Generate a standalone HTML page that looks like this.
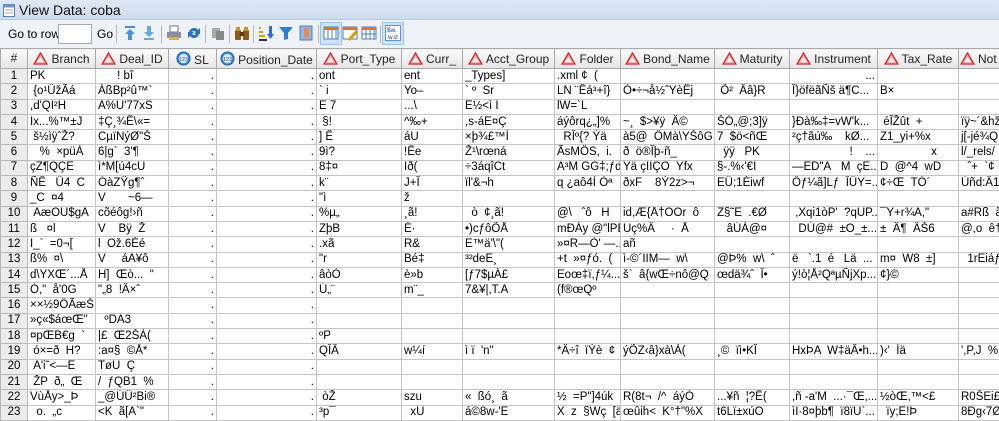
<!DOCTYPE html>
<html><head><meta charset="utf-8">
<style>
*{margin:0;padding:0;box-sizing:border-box}
body{width:999px;height:421px;overflow:hidden;background:#fff;font-family:"Liberation Sans",sans-serif;font-size:12px;color:#000;position:relative}
#title{position:absolute;left:0;top:0;width:999px;height:20px;background:linear-gradient(#dfe9f5,#cddcee);border-bottom:1px solid #b9c9dd}
#title span{position:absolute;left:19px;top:2px;font-size:14px;color:#111}
#tb{position:absolute;left:0;top:20px;width:999px;height:28px;background:#eef1f5}
.t{position:absolute;top:7px;font-size:12px}
#inp{position:absolute;left:58px;top:4px;width:34px;height:20px;background:#fff;border:1px solid #a8a8a8}
.sep{position:absolute;top:5px;width:1px;height:18px;background:#b8b8b8}
.ic{position:absolute;top:5px;width:16px;height:16px}
.hl{position:absolute;top:2px;width:22px;height:23px;background:#cfe3f7;border:1px solid #9cc3ea}
#grid{position:absolute;left:0;top:48px;width:999px;height:373px;overflow:hidden}
table{border-collapse:collapse;table-layout:fixed;width:1040px}
td,th{border:1px solid #c4c4c4;white-space:nowrap;overflow:hidden;padding:0 2px;height:15.3px;line-height:13px;font-weight:normal;font-size:11.5px}
th{height:20px;background:linear-gradient(#fafafa,#e6e6e6);border-color:#a9a9a9;font-size:12px;color:#222;padding:0 1px}
th svg{vertical-align:-2px;margin-right:3px}
td.n{background:#ececec;text-align:center;border-color:#b8b8b8}
td.r{text-align:right}
</style></head><body>
<div id="title">
<svg style="position:absolute;left:3px;top:3px" width="13" height="14"><rect x="0.5" y="1.5" width="11" height="12" fill="#fff" stroke="#5a7fb0"/><rect x="0.5" y="1.5" width="11" height="3" fill="#6f95c8"/><line x1="2" y1="7" x2="10" y2="7" stroke="#9ab"/><line x1="2" y1="10" x2="10" y2="10" stroke="#9ab"/></svg>
<span>View Data: coba</span></div>
<div id="tb">
<span class="t" style="left:8px">Go to row</span>
<div id="inp"></div>
<span class="t" style="left:97px">Go</span>
<div class="sep" style="left:116px"></div>
<svg class="ic" style="left:122px" viewBox="0 0 16 16"><rect x="3" y="1" width="10" height="2" fill="#4a90d9"/><path d="M8 4 L3 9 H6 V15 H10 V9 H13Z" fill="#4a90d9"/></svg>
<svg class="ic" style="left:141px" viewBox="0 0 16 16"><path d="M6 1 H10 V7 H13 L8 12 L3 7 H6Z" fill="#6aa7e0"/><rect x="3" y="13" width="10" height="2" fill="#6aa7e0"/></svg>
<div class="sep" style="left:161px"></div>
<svg class="ic" style="left:166px" viewBox="0 0 16 16"><rect x="4" y="1" width="8" height="6" fill="#fff" stroke="#777"/><rect x="1" y="7" width="14" height="6" fill="#8a8fa0"/><rect x="3" y="12" width="10" height="3" fill="#e0b050"/></svg>
<svg class="ic" style="left:186px" viewBox="0 0 16 16"><path d="M3 8 A5 5 0 0 1 12 5 L14 3 V9 H8 L10 7 A3 3 0 0 0 5 8Z M13 8 A5 5 0 0 1 4 11 L2 13 V7 H8 L6 9 A3 3 0 0 0 11 8Z" fill="#2b6fc7"/></svg>
<div class="sep" style="left:205px"></div>
<svg class="ic" style="left:210px" viewBox="0 0 16 16"><rect x="2" y="3" width="8" height="10" fill="#aaa"/><rect x="6" y="6" width="8" height="9" fill="#888"/></svg>
<div class="sep" style="left:229px"></div>
<svg class="ic" style="left:234px" viewBox="0 0 16 16"><rect x="1" y="5" width="6" height="10" rx="1" fill="#8a5a1a"/><rect x="9" y="5" width="6" height="10" rx="1" fill="#8a5a1a"/><rect x="2" y="2" width="4" height="4" fill="#c9922e"/><rect x="10" y="2" width="4" height="4" fill="#c9922e"/><rect x="6" y="7" width="4" height="4" fill="#5a3a10"/></svg>
<div class="sep" style="left:253px"></div>
<svg class="ic" style="left:258px" viewBox="0 0 16 16"><rect x="1" y="2" width="2" height="2" fill="#d9a400"/><rect x="1" y="6" width="4" height="2" fill="#d9a400"/><rect x="1" y="10" width="6" height="2" fill="#d9a400"/><rect x="1" y="14" width="8" height="2" fill="#333"/><path d="M11 1 H14 V9 H16 L12.5 14 L9 9 H11Z" fill="#2b6fc7"/></svg>
<svg class="ic" style="left:278px" viewBox="0 0 16 16"><path d="M1 2 H15 L10 8 V14 L6 15 V8Z" fill="#2b7fd0"/></svg>
<svg class="ic" style="left:298px" viewBox="0 0 16 16"><rect x="2" y="1" width="12" height="14" fill="#8cb8e8" stroke="#4a80c0"/><rect x="6" y="3" width="5" height="10" fill="#e85" /></svg>
<div class="sep" style="left:318px"></div>
<div class="hl" style="left:320px"></div>
<svg class="ic" style="left:323px" viewBox="0 0 16 16"><rect x="1" y="2" width="14" height="12" fill="#fff" stroke="#4a80c0"/><rect x="1" y="2" width="14" height="3" fill="#e07030"/><path d="M5 5V14M9 5V14M13 5V14" stroke="#4a80c0"/></svg>
<svg class="ic" style="left:342px" viewBox="0 0 16 16"><rect x="1" y="2" width="14" height="12" fill="#fff" stroke="#4a80c0"/><rect x="1" y="2" width="14" height="3" fill="#e07030"/><path d="M7 15 L15 6" stroke="#d4a000" stroke-width="3"/></svg>
<svg class="ic" style="left:361px" viewBox="0 0 16 16"><rect x="1" y="2" width="14" height="12" fill="#fff" stroke="#4a80c0"/><rect x="1" y="2" width="14" height="3" fill="#e07030"/><path d="M5 5V14M9 5V14M13 5V14M1 9H15" stroke="#4a80c0"/></svg>
<div class="sep" style="left:380px"></div>
<div class="hl" style="left:382px"></div>
<svg class="ic" style="left:385px" viewBox="0 0 16 16"><rect x="0.5" y="0.5" width="15" height="15" fill="#fff" stroke="#6a8fc0"/><text x="2" y="7" font-size="6.5" fill="#1a3f90" font-family="Liberation Sans">$w.</text><text x="3" y="14" font-size="6.5" fill="#1a3f90" font-family="Liberation Sans">w.d</text></svg>
</div>
<svg width="0" height="0" style="position:absolute"><defs>
<symbol id="tri" viewBox="0 0 16 14"><path d="M8 1 L15 13 H1Z" fill="#f4a0a0" stroke="#d02020" stroke-width="1.3"/><path d="M8 5 L11.5 11 H4.5Z" fill="#fff"/></symbol>
<symbol id="num" viewBox="0 0 16 16"><circle cx="8" cy="8" r="7" fill="#3f84d8" stroke="#1f5fb0"/><circle cx="8" cy="8" r="5" fill="#dbe9fa"/><text x="8" y="10.5" font-size="6" text-anchor="middle" fill="#1f5fb0" font-family="Liberation Sans">123</text></symbol>
</defs></svg>
<div id="grid"><table>
<colgroup><col style="width:27px"><col style="width:68px"><col style="width:73px"><col style="width:48px"><col style="width:100px"><col style="width:85px"><col style="width:61px"><col style="width:92px"><col style="width:66px"><col style="width:94px"><col style="width:75px"><col style="width:88px"><col style="width:81px"><col style="width:82px"></colgroup>
<tr><th>#</th><th><svg width="15" height="13"><use href="#tri"/></svg>Branch</th><th><svg width="15" height="13"><use href="#tri"/></svg>Deal_ID</th><th><svg width="15" height="15"><use href="#num"/></svg>SL</th><th><svg width="15" height="15"><use href="#num"/></svg>Position_Date</th><th><svg width="15" height="13"><use href="#tri"/></svg>Port_Type</th><th><svg width="15" height="13"><use href="#tri"/></svg>Curr_</th><th><svg width="15" height="13"><use href="#tri"/></svg>Acct_Group</th><th><svg width="15" height="13"><use href="#tri"/></svg>Folder</th><th><svg width="15" height="13"><use href="#tri"/></svg>Bond_Name</th><th><svg width="15" height="13"><use href="#tri"/></svg>Maturity</th><th><svg width="15" height="13"><use href="#tri"/></svg>Instrument</th><th><svg width="15" height="13"><use href="#tri"/></svg>Tax_Rate</th><th style="text-align:left"><svg width="15" height="13"><use href="#tri"/></svg>Not</th></tr>
<tr><td class="n">1</td><td>PK</td><td>&nbsp; &nbsp; &nbsp; ! bî</td><td class="r">.</td><td class="r">.</td><td>ont</td><td>ent</td><td>_Types]</td><td>.xml ¢ &nbsp;(</td><td></td><td></td><td class="r">...</td><td></td><td></td></tr>
<tr><td class="n">2</td><td>&nbsp;{o¹ÛžÃá</td><td>ÁßBp²û™`</td><td class="r">.</td><td class="r">.</td><td>` i</td><td>Yo–</td><td>` º &nbsp;Sr</td><td>LN ¨Êá³+î}</td><td>Ò•÷¬å½ˆYèËj</td><td>&nbsp;Õ² &nbsp;Ââ}R</td><td>Î}öfëãÑš ä¶C...</td><td>B×</td><td></td></tr>
<tr><td class="n">3</td><td>,d'QI²H</td><td>Â%Û'77xS</td><td class="r">.</td><td class="r">.</td><td>È 7</td><td>...\</td><td>È½&lt;ì Ï</td><td>lW=`L</td><td></td><td></td><td></td><td></td><td></td></tr>
<tr><td class="n">4</td><td>Ix...%™±J</td><td>‡Ç¸¾Ê\«=</td><td class="r">.</td><td class="r">.</td><td>&nbsp;§!</td><td>^‰+</td><td>,s-áE¤Ç</td><td>áýôrq¿„]%</td><td>~¸ &nbsp;$&gt;¥ÿ &nbsp;Ä©</td><td>ŠÓ„@;3]ÿ</td><td>}Ðà‰‡=vW'k...</td><td>&nbsp;éÎŽût &nbsp;+</td><td>ïÿ~´&amp;hž</td></tr>
<tr><td class="n">5</td><td>&nbsp;š½ìÿˆŽ?</td><td>CµïNýØ"Š</td><td class="r">.</td><td class="r">.</td><td>] Ê</td><td>áU</td><td>×þ¾£™Ì</td><td>&nbsp; RÎº{? Ýä</td><td>à5@ &nbsp;ÔMà\YŠôG</td><td>7 &nbsp;$ö&lt;ñŒ</td><td>²ç†ãú‰ &nbsp; &nbsp;kØ...</td><td>Z1_yi+%x</td><td>j[-jé¾Q</td></tr>
<tr><td class="n">6</td><td>&nbsp; &nbsp;% &nbsp;×püÀ</td><td>6|g` &nbsp;3'¶</td><td class="r">.</td><td class="r">.</td><td>9ì?</td><td>!Êe</td><td>Ž¹\rœná</td><td>ÃsMÖS, &nbsp;i.</td><td>ð &nbsp;ö®Îþ-ñ_</td><td>&nbsp; ÿÿ &nbsp; PK</td><td class="r">! &nbsp; &nbsp;...</td><td class="r">x &nbsp; &nbsp; &nbsp;</td><td>l/_rels/</td></tr>
<tr><td class="n">7</td><td>çŽ¶QÇÊ</td><td>ì*M[ú4cÙ</td><td class="r">.</td><td class="r">.</td><td>8‡¤</td><td>Îð(</td><td>÷3áqîCt</td><td>À³M GG‡;ƒd</td><td>Ÿä çÎÌÇÒ &nbsp;Ÿfx</td><td>§-.%‹'€Î</td><td>—ËD"Ä &nbsp; M &nbsp;çE...</td><td>D &nbsp;@^4 &nbsp;wD</td><td>&nbsp; ˆ+ &nbsp;`¢</td></tr>
<tr><td class="n">8</td><td>ÑÊ &nbsp; Û4 &nbsp;C</td><td>ÓàZŸg¶ˆ</td><td class="r">.</td><td class="r">.</td><td>k¨</td><td>J+Î</td><td>ïl'&amp;¬h</td><td>q ¿aô4Í Òª</td><td>ðxF &nbsp; &nbsp;8Ý2z&gt;¬</td><td>EÛ;1Èiwf</td><td>Ôƒ¼ã]Lƒ &nbsp;ÎÛY=...</td><td>¢÷Œ &nbsp;TÓ´</td><td>Úñd:Ä1Ê</td></tr>
<tr><td class="n">9</td><td>_C &nbsp;¤4</td><td>V &nbsp; &nbsp; &nbsp; ~6—</td><td class="r">.</td><td class="r">.</td><td>"ì</td><td>ž</td><td></td><td></td><td></td><td></td><td></td><td></td><td></td></tr>
<tr><td class="n">10</td><td>&nbsp;ÂæÒU$gÂ</td><td>cõéôg!›ñ</td><td class="r">.</td><td class="r">.</td><td>%µ„</td><td>¸ã!</td><td>&nbsp; ò &nbsp;¢¸ã!</td><td>@\ &nbsp; ˆô &nbsp; H</td><td>id,Æ{Å†ÓÖr &nbsp;ô</td><td>Z§˜È &nbsp;.€Ø</td><td>&nbsp;,Xqi1òP' &nbsp;?qÜP...</td><td>¯Y+r¾Ã,"</td><td>a#Rß &nbsp;ã</td></tr>
<tr><td class="n">11</td><td>ß &nbsp; ¤l</td><td>V &nbsp; &nbsp;Bÿ &nbsp;Ž</td><td class="r">.</td><td class="r">.</td><td>ZþB</td><td>È·</td><td>•)cƒôÕÅ</td><td>mÐÁy @"lPÉ</td><td>Uç%Ä &nbsp; &nbsp; · &nbsp;Å</td><td>&nbsp; &nbsp;âÚÀ@¤</td><td>&nbsp; DÚ@# &nbsp;±O_±...</td><td>± &nbsp;Ä¶ &nbsp;ÄŠ6</td><td>@,o &nbsp;ê†</td></tr>
<tr><td class="n">12</td><td>I_` &nbsp;=0¬[</td><td>l &nbsp;Ož.6Èé</td><td class="r">.</td><td class="r">.</td><td>.xã</td><td>R&amp;</td><td>E™ä'\"(</td><td>»¤R—Ò' —...</td><td>añ</td><td></td><td></td><td></td><td></td></tr>
<tr><td class="n">13</td><td>ß% &nbsp;¤\</td><td>V &nbsp; &nbsp; áÂ¥ô</td><td class="r">.</td><td class="r">.</td><td>"r</td><td>Bé‡</td><td>³²deÊ¸</td><td>+t &nbsp;»¤ƒó. &nbsp;(</td><td>ì-©´ÎÎM— &nbsp;w\</td><td>@Þ% &nbsp;w\ &nbsp;ˆ</td><td>ë &nbsp; `.1 &nbsp;é &nbsp; Lä &nbsp;...</td><td>m¤ &nbsp;W8 &nbsp;±]</td><td>&nbsp; 1rÉiáƒ</td></tr>
<tr><td class="n">14</td><td>d\YXŒ´...Å</td><td>H] &nbsp;Œò... &nbsp;"</td><td class="r">.</td><td class="r">.</td><td>âòÒ</td><td>è»b</td><td>[ƒ7$µÁ£</td><td>Eoœ‡ï,ƒ¼...</td><td>š` &nbsp;â{wŒ÷nô@Q</td><td>œdä¾ˆ &nbsp;Î•</td><td>ý!ò¦Å²QªµÑjXp...</td><td>¢}©</td><td></td></tr>
<tr><td class="n">15</td><td>Ó," &nbsp;å'0G</td><td>"„8 &nbsp;!Ä×ˆ</td><td class="r">.</td><td class="r">.</td><td>Ú„¨</td><td>m¨_</td><td>7&amp;¥|,T.A</td><td>(f®œQº</td><td></td><td></td><td></td><td></td><td></td></tr>
<tr><td class="n">16</td><td>××½9ÔÃæŠ</td><td></td><td class="r">.</td><td class="r">.</td><td></td><td></td><td></td><td></td><td></td><td></td><td></td><td></td><td></td></tr>
<tr><td class="n">17</td><td>»ç«$áœŒ"</td><td>&nbsp; ºDÀ3</td><td class="r">.</td><td class="r">.</td><td></td><td></td><td></td><td></td><td></td><td></td><td></td><td></td><td></td></tr>
<tr><td class="n">18</td><td>¤pŒB€g &nbsp;`</td><td>|£ &nbsp;Œ2ŠÁ(</td><td class="r">.</td><td class="r">.</td><td>ºP</td><td></td><td></td><td></td><td></td><td></td><td></td><td></td><td></td></tr>
<tr><td class="n">19</td><td>&nbsp;ó×=ð &nbsp;H?</td><td>:a¤§ &nbsp;©Å*</td><td class="r">.</td><td class="r">.</td><td>QÎÂ</td><td>w¼í</td><td>ì ï &nbsp;'n"</td><td>*Ä÷î &nbsp;ïÝè &nbsp;¢</td><td>ýÕZ‹â}xà\À(</td><td>¸© &nbsp;ïì•KÎ</td><td>HxÞA &nbsp;W‡äÂ•h...</td><td>)‹' &nbsp;Ìä</td><td>',P,J &nbsp;%B</td></tr>
<tr><td class="n">20</td><td>&nbsp;Â'i˜&lt;—Ë</td><td>TøÚ &nbsp;Ç</td><td class="r">.</td><td class="r">.</td><td></td><td></td><td></td><td></td><td></td><td></td><td></td><td></td><td></td></tr>
<tr><td class="n">21</td><td>&nbsp;ŽP &nbsp;ð„ &nbsp;Œ</td><td>/ &nbsp;ƒQB1 &nbsp;%</td><td class="r">.</td><td class="r">.</td><td></td><td></td><td></td><td></td><td></td><td></td><td></td><td></td><td></td></tr>
<tr><td class="n">22</td><td>VùÅy&gt;_Þ</td><td>_@ÚÛ²Bi®</td><td class="r">.</td><td class="r">.</td><td>&nbsp;òŽ</td><td>szu</td><td>« &nbsp;ßó¸ &nbsp;ã</td><td>½ &nbsp;=P"]4úk</td><td>R(8t¬ &nbsp;/^ &nbsp;áýÓ</td><td>...¥ñ &nbsp;¦?Ê(</td><td>,ñ -a'M &nbsp;...·¯Œ,...</td><td>½òŒ,™&lt;£</td><td>R0ŠEi£D</td></tr>
<tr><td class="n">23</td><td>&nbsp; o. &nbsp;„c</td><td>&lt;K &nbsp;ã[Â`"</td><td class="r">.</td><td class="r">.</td><td>³p¯</td><td>&nbsp; xÚ</td><td>á©8w-'É</td><td>X &nbsp;z &nbsp;§Wç &nbsp;[ä</td><td>œûih&lt; &nbsp;K°†"%X</td><td>t6Lï±xúO</td><td>ìÏ·8¤þb¶ &nbsp;ï8ïÜ`...</td><td>&nbsp; ïy;Ê!Þ</td><td>8Ðg‹7Øb</td></tr>
<tr><td class="n">24</td><td></td><td></td><td></td><td></td><td></td><td></td><td></td><td></td><td></td><td></td><td></td><td></td><td></td></tr>
</table></div>
</body></html>
